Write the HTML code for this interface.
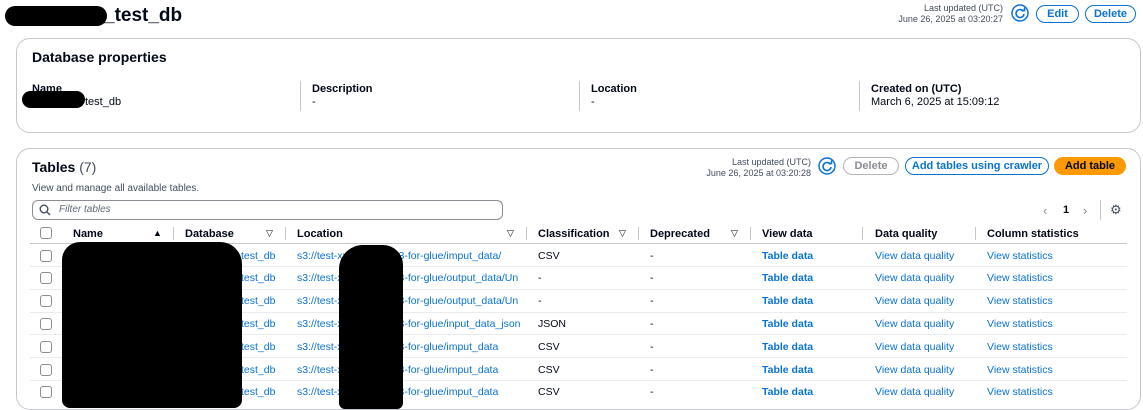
<!DOCTYPE html>
<html><head><style>
*{box-sizing:border-box;margin:0;padding:0}
body{width:1143px;height:409px;background:#fff;font-family:"Liberation Sans",sans-serif;color:#000716;position:relative;overflow:hidden;font-size:11px}
.a{position:absolute;white-space:nowrap}
.card{position:absolute;border:1px solid #c6c6cd;border-radius:14px;background:#fff}
.b{font-weight:bold}
.lnk{color:#0972d3}
.btn{position:absolute;border:1.5px solid #0972d3;border-radius:12px;color:#0972d3;font-weight:bold;font-size:11px;display:flex;align-items:center;justify-content:center}
.div{position:absolute;width:1px;background:#c6c6cd}
.cb{position:absolute;width:12px;height:12px;border:1px solid #8c8c94;border-radius:3px}
.blob{position:absolute;background:#000}
.sm{font-size:9px;color:#414d5c;text-align:right}
.r{font-size:10.5px}
</style></head><body>
<div class="blob" style="left:5px;top:6px;width:102px;height:20px;border-radius:12px"></div>
<div class="a b" style="left:104px;top:5px;font-size:19px">_test_db</div>
<div class="a sm" style="right:140px;top:3px;line-height:11px">Last updated (UTC)<br>June 26, 2025 at 03:20:27</div>
<svg class="a" style="left:1011px;top:4px" width="18" height="18" viewBox="0 0 18 18"><circle cx="9" cy="9" r="8" fill="none" stroke="#0972d3" stroke-width="1.5"/><path d="M12.5 7.5A4 4 0 1 0 13 10" fill="none" stroke="#0972d3" stroke-width="1.6"/><path d="M10.5 6.5h3v-3" fill="none" stroke="#0972d3" stroke-width="1.6"/></svg>
<div class="btn" style="left:1036px;top:5px;width:43px;height:18px">Edit</div>
<div class="btn" style="left:1085px;top:5px;width:51px;height:18px">Delete</div>

<div class="card" style="left:16px;top:38px;width:1125px;height:95px"></div>
<div class="a b" style="left:32px;top:49px;font-size:14px">Database properties</div>
<div class="a b" style="left:32px;top:83px">Name</div>
<div class="blob" style="left:22px;top:91px;width:63px;height:17px;border-radius:9px"></div>
<div class="a" style="left:85px;top:96px">test_db</div>
<div class="div" style="left:300px;top:81px;height:30px"></div>
<div class="a b" style="left:312px;top:83px">Description</div><div class="a" style="left:312px;top:96px">-</div>
<div class="div" style="left:579px;top:81px;height:30px"></div>
<div class="a b" style="left:591px;top:83px">Location</div><div class="a" style="left:591px;top:96px">-</div>
<div class="div" style="left:859px;top:81px;height:30px"></div>
<div class="a b" style="left:871px;top:83px">Created on (UTC)</div><div class="a" style="left:871px;top:96px">March 6, 2025 at 15:09:12</div>

<div class="card" style="left:16px;top:148px;width:1125px;height:262px"></div>
<div class="a" style="left:32px;top:159px;font-size:14px"><b>Tables</b> <span style="color:#414d5c">(7)</span></div>
<div class="a" style="left:32px;top:183px;font-size:10px;color:#414d5c">View and manage all available tables.</div>
<div class="a sm" style="right:332px;top:157px;line-height:11px">Last updated (UTC)<br>June 26, 2025 at 03:20:28</div>
<svg class="a" style="left:818px;top:157px" width="18" height="18" viewBox="0 0 18 18"><circle cx="9" cy="9" r="8" fill="none" stroke="#0972d3" stroke-width="1.5"/><path d="M12.5 7.5A4 4 0 1 0 13 10" fill="none" stroke="#0972d3" stroke-width="1.6"/><path d="M10.5 6.5h3v-3" fill="none" stroke="#0972d3" stroke-width="1.6"/></svg>
<div class="btn" style="left:843px;top:157px;width:56px;height:18px;border-color:#b4b4bb;color:#8c8c94;border-width:1px">Delete</div>
<div class="btn" style="left:905px;top:157px;width:144px;height:18px">Add tables using crawler</div>
<div class="btn" style="left:1054px;top:157px;width:72px;height:18px;background:#ff9900;border-color:#ff9900;color:#000716">Add table</div>
<div class="a" style="left:32px;top:200px;width:471px;height:20px;border:1px solid #8c8c94;border-radius:6px"></div>
<svg class="a" style="left:39px;top:204px" width="12" height="12" viewBox="0 0 12 12"><circle cx="5" cy="5" r="3.8" fill="none" stroke="#414d5c" stroke-width="1.4"/><path d="M8 8l3 3" stroke="#414d5c" stroke-width="1.4"/></svg>
<div class="a" style="left:59px;top:204px;font-style:italic;color:#5f6b7a;font-size:10px">Filter tables</div>
<div class="a" style="left:1043px;top:203px;color:#8c8c94;font-size:13px">‹</div>
<div class="a b" style="left:1063px;top:204px">1</div>
<div class="a" style="left:1083px;top:203px;color:#8c8c94;font-size:13px">›</div>
<div class="div" style="left:1100px;top:200px;height:20px"></div>
<div class="a" style="left:1110px;top:202px;font-size:13px;color:#414d5c">⚙</div>

<div class="cb" style="left:40px;top:227px"></div>
<div class="a b" style="left:73px;top:228px">Name</div><div class="a" style="left:153px;top:228px;font-size:9px">▲</div>
<div class="div" style="left:173px;top:227px;height:13px"></div>
<div class="a b" style="left:185px;top:228px">Database</div><div class="a" style="left:266px;top:228px;font-size:9px">▽</div>
<div class="div" style="left:285px;top:227px;height:13px"></div>
<div class="a b" style="left:297px;top:228px">Location</div><div class="a" style="left:507px;top:228px;font-size:9px">▽</div>
<div class="div" style="left:526px;top:227px;height:13px"></div>
<div class="a b" style="left:538px;top:228px">Classification</div><div class="a" style="left:619px;top:228px;font-size:9px">▽</div>
<div class="div" style="left:638px;top:227px;height:13px"></div>
<div class="a b" style="left:650px;top:228px">Deprecated</div><div class="a" style="left:731px;top:228px;font-size:9px">▽</div>
<div class="div" style="left:750px;top:227px;height:13px"></div>
<div class="a b" style="left:762px;top:228px">View data</div>
<div class="div" style="left:862px;top:227px;height:13px"></div>
<div class="a b" style="left:875px;top:228px">Data quality</div>
<div class="div" style="left:975px;top:227px;height:13px"></div>
<div class="a b" style="left:987px;top:228px">Column statistics</div>
<div class="a" style="left:30px;top:243px;width:1097px;height:1px;background:#c6c6cd"></div>

<div id="rows"></div>
<script>
var locs=["s3://test-xxxxxxxxxx-s3-for-glue/imput_data/","s3://test-xxxxxxxxxx-s3-for-glue/output_data/Un","s3://test-xxxxxxxxxx-s3-for-glue/output_data/Un","s3://test-xxxxxxxxxx-s3-for-glue/input_data_json","s3://test-xxxxxxxxxx-s3-for-glue/imput_data","s3://test-xxxxxxxxxx-s3-for-glue/imput_data","s3://test-xxxxxxxxxx-s3-for-glue/imput_data"];
var cls=["CSV","-","-","JSON","CSV","CSV","CSV"];
var h="";
for(var i=0;i<7;i++){var y=249.5+i*22.8;
h+='<div class="cb" style="left:40px;top:'+(y)+'px"></div>';
h+='<div class="a lnk r" style="left:241px;top:'+y+'px">test_db</div>';
h+='<div class="a lnk r" style="left:297px;top:'+y+'px;width:226px;overflow:hidden">'+locs[i]+'</div>';
h+='<div class="a r" style="left:538px;top:'+y+'px">'+cls[i]+'</div>';
h+='<div class="a r" style="left:650px;top:'+y+'px">-</div>';
h+='<div class="a lnk b r" style="left:762px;top:'+y+'px">Table data</div>';
h+='<div class="a lnk r" style="left:875px;top:'+y+'px">View data quality</div>';
h+='<div class="a lnk r" style="left:987px;top:'+y+'px">View statistics</div>';
if(i<6)h+='<div class="a" style="left:30px;top:'+(y+16.5)+'px;width:1097px;height:1px;background:#e9ebed"></div>';}
document.getElementById("rows").innerHTML=h;
</script>
<div class="blob" style="left:62px;top:242px;width:180px;height:166px;border-radius:18px 22px 8px 8px"></div>
<div class="blob" style="left:339px;top:245px;width:64px;height:164px;border-radius:24px 20px 6px 6px"></div>
</body></html>
